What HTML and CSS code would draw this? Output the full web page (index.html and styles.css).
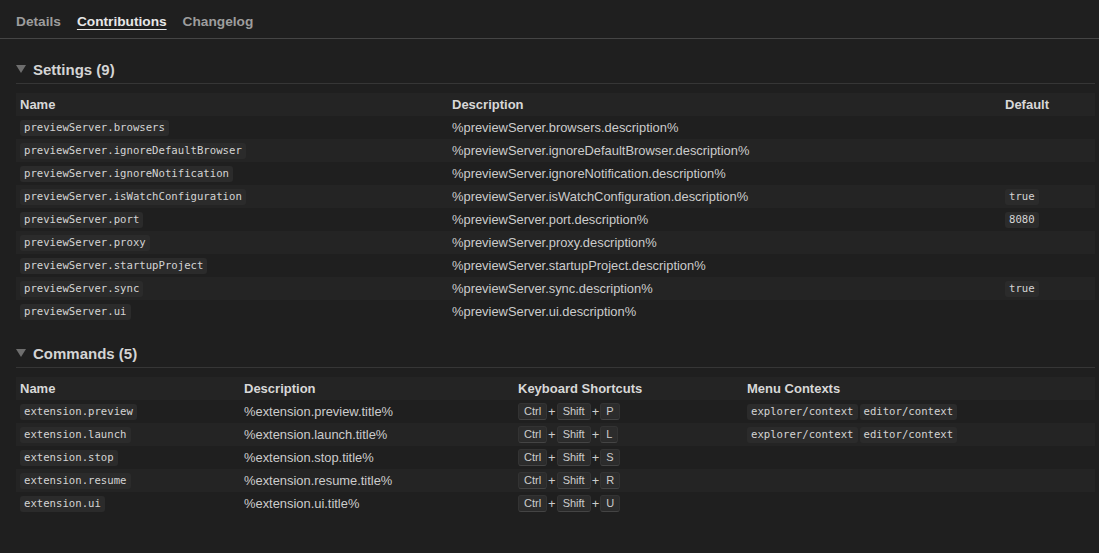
FILE: index.html
```html
<!DOCTYPE html>
<html>
<head>
<meta charset="utf-8">
<link rel="stylesheet" href="styles.css">
</head>
<body>
<nav class="tabs">
  <span class="tab">Details</span>
  <span class="tab active">Contributions</span>
  <span class="tab">Changelog</span>
</nav>
<main class="content">
  <section class="section">
    <h2 class="section-title"><span class="twisty"></span>Settings (9)</h2>
    <div class="table settings">
      <div class="row head"><div>Name</div><div>Description</div><div>Default</div></div>
      <div class="row"><div><code>previewServer.browsers</code></div><div>%previewServer.browsers.description%</div><div></div></div>
      <div class="row"><div><code>previewServer.ignoreDefaultBrowser</code></div><div>%previewServer.ignoreDefaultBrowser.description%</div><div></div></div>
      <div class="row"><div><code>previewServer.ignoreNotification</code></div><div>%previewServer.ignoreNotification.description%</div><div></div></div>
      <div class="row"><div><code>previewServer.isWatchConfiguration</code></div><div>%previewServer.isWatchConfiguration.description%</div><div><code>true</code></div></div>
      <div class="row"><div><code>previewServer.port</code></div><div>%previewServer.port.description%</div><div><code>8080</code></div></div>
      <div class="row"><div><code>previewServer.proxy</code></div><div>%previewServer.proxy.description%</div><div></div></div>
      <div class="row"><div><code>previewServer.startupProject</code></div><div>%previewServer.startupProject.description%</div><div></div></div>
      <div class="row"><div><code>previewServer.sync</code></div><div>%previewServer.sync.description%</div><div><code>true</code></div></div>
      <div class="row"><div><code>previewServer.ui</code></div><div>%previewServer.ui.description%</div><div></div></div>
    </div>
  </section>
  <section class="section">
    <h2 class="section-title"><span class="twisty"></span>Commands (5)</h2>
    <div class="table commands">
      <div class="row head"><div>Name</div><div>Description</div><div>Keyboard Shortcuts</div><div>Menu Contexts</div></div>
      <div class="row"><div><code>extension.preview</code></div><div>%extension.preview.title%</div>
        <div class="keys"><kbd>Ctrl</kbd><span class="plus">+</span><kbd>Shift</kbd><span class="plus">+</span><kbd>P</kbd></div>
        <div class="menus"><code>explorer/context</code><code>editor/context</code></div></div>
      <div class="row"><div><code>extension.launch</code></div><div>%extension.launch.title%</div>
        <div class="keys"><kbd>Ctrl</kbd><span class="plus">+</span><kbd>Shift</kbd><span class="plus">+</span><kbd>L</kbd></div>
        <div class="menus"><code>explorer/context</code><code>editor/context</code></div></div>
      <div class="row"><div><code>extension.stop</code></div><div>%extension.stop.title%</div>
        <div class="keys"><kbd>Ctrl</kbd><span class="plus">+</span><kbd>Shift</kbd><span class="plus">+</span><kbd>S</kbd></div>
        <div class="menus"></div></div>
      <div class="row"><div><code>extension.resume</code></div><div>%extension.resume.title%</div>
        <div class="keys"><kbd>Ctrl</kbd><span class="plus">+</span><kbd>Shift</kbd><span class="plus">+</span><kbd>R</kbd></div>
        <div class="menus"></div></div>
      <div class="row"><div><code>extension.ui</code></div><div>%extension.ui.title%</div>
        <div class="keys"><kbd>Ctrl</kbd><span class="plus">+</span><kbd>Shift</kbd><span class="plus">+</span><kbd>U</kbd></div>
        <div class="menus"></div></div>
    </div>
  </section>
</main>
</body>
</html>
```
FILE: styles.css
```css
html, body {
  margin: 0;
  padding: 0;
  background: #1f1f1f;
  color: #cccccc;
  font-family: "Liberation Sans", Arial, sans-serif;
  font-size: 12.9px;
}

.tabs {
  display: flex;
  align-items: center;
  gap: 16px;
  height: 39px;
  padding: 5px 16px 0;
  box-sizing: border-box;
  border-bottom: 1px solid #454545;
}

.tab {
  font-size: 13.7px;
  font-weight: bold;
  color: #9d9d9d;
  line-height: 18px;
}

.tab.active {
  color: #e7e7e7;
  text-decoration: underline;
  text-underline-offset: 3px;
}

.content {
  padding: 0 4px 0 16px;
}

.section {
  padding-top: 20px;
}

.section-title {
  display: flex;
  align-items: center;
  margin: 0;
  height: 20px;
  padding-bottom: 4px;
  border-bottom: 1px solid #363636;
  font-size: 15px;
  font-weight: bold;
  color: #d4d4d4;
}

.twisty {
  width: 0;
  height: 0;
  border-left: 5px solid transparent;
  border-right: 5px solid transparent;
  border-top: 8px solid #6e6e6e;
  margin-right: 7px;
}

.table {
  margin-top: 9px;
}

.row {
  display: grid;
  height: 23px;
  align-items: center;
  white-space: nowrap;
}

.row > div {
  padding: 0 4px;
  display: flex;
  align-items: center;
}

.row.head {
  font-weight: bold;
  font-size: 13px;
  color: #d8d8d8;
}

.row:nth-child(odd) {
  background: #242424;
}

.settings .row {
  grid-template-columns: 432px 553px 1fr;
}

.commands .row {
  grid-template-columns: 224px 274px 229px 1fr;
}

code {
  font-family: "DejaVu Sans Mono", "Liberation Mono", monospace;
  font-size: 10.65px;
  line-height: 16px;
  background: #2b2b2b;
  color: #d4d4d4;
  border-radius: 3px;
  padding: 0 4px;
}

.menus {
  gap: 2px;
}

kbd {
  font-family: "Liberation Sans", Arial, sans-serif;
  font-size: 11px;
  line-height: 15px;
  color: #cccccc;
  background: #2c2c2c;
  border: 1px solid #333333;
  border-bottom-color: #444444;
  box-shadow: inset 0 -1px 0 #2a2a2a;
  border-radius: 3px;
  padding: 0 5px;
}

.plus {
  padding: 0 1px;
  color: #cccccc;
}
```
